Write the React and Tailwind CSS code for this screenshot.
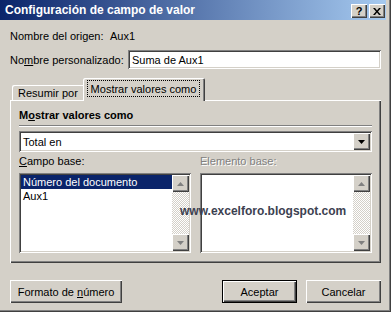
const raised = 'shadow-[inset_1px_1px_0_#ffffff,inset_-1px_-1px_0_#404040,inset_-2px_-2px_0_#808080]'
const sunken = 'shadow-[inset_1px_1px_0_#808080,inset_-1px_-1px_0_#ffffff,inset_2px_2px_0_#404040,inset_-2px_-2px_0_#d4d0c8]'

const Arrow = ({ up, color = '#000' }) => (
  <svg width="7" height="4" viewBox="0 0 7 4">
    {up ? <polygon points="3.5,0 7,4 0,4" fill={color} /> : <polygon points="0,0 7,0 3.5,4" fill={color} />}
  </svg>
)

const ScrollBar = () => (
  <div className="flex flex-col w-[17px] h-full">
    <div className={`h-[17px] bg-[#d4d0c8] flex items-center justify-center ${raised}`}>
      <Arrow up color="#808080" />
    </div>
    <div className="flex-1 bg-[repeating-conic-gradient(#d4d0c8_0_25%,#ffffff_0_50%)] bg-[length:2px_2px]" />
    <div className={`h-[17px] bg-[#d4d0c8] flex items-center justify-center ${raised}`}>
      <Arrow color="#808080" />
    </div>
  </div>
)

const Button = ({ children, className = '', isDefault }) => (
  <div className={`h-[23px] flex items-center justify-center bg-[#d4d0c8] ${isDefault ? 'border border-black' : ''} ${className}`}>
    <div className={`w-full h-full flex items-center justify-center ${raised}`}>
      <span>{children}</span>
    </div>
  </div>
)

export default function App() {
  return (
    <div className="relative w-[391px] h-[312px] overflow-hidden bg-[#d4d0c8] text-[11px] leading-[14px] text-black font-['Liberation_Sans',Arial,sans-serif] shadow-[inset_-1px_-1px_0_#404040,inset_-2px_-2px_0_#808080]">
      {/* title bar */}
      <div className="h-[20px] mr-[5px] flex items-start justify-between bg-[linear-gradient(to_right,#0a246a,#a6caf0)]">
        <div className="pl-[5px] pt-[3px] text-white font-bold text-[12px] leading-[15px]">Configuración de campo de valor</div>
        <div className="flex gap-[2px] pt-[4px] pr-[1px]">
          <div className={`w-[16px] h-[14px] bg-[#d4d0c8] flex items-center justify-center font-bold text-[11px] ${raised}`}>?</div>
          <div className={`w-[16px] h-[14px] bg-[#d4d0c8] flex items-center justify-center ${raised}`}>
            <svg width="8" height="7" viewBox="0 0 8 7">
              <path d="M0 0h2l2 2.5L6 0h2L5 3.5 8 7H6L4 4.5 2 7H0l3-3.5z" fill="#000" />
            </svg>
          </div>
        </div>
      </div>

      <div className="px-[10px]">
        <div className="mt-[9px] h-[14px] flex">
          <span className="w-[100px]">Nombre del origen:</span>
          <span>Aux1</span>
        </div>

        <div className="mt-[7px] flex items-center h-[19px]">
          <span className="w-[118px]">No<u>m</u>bre personalizado:</span>
          <div className={`flex-1 h-[19px] bg-white flex items-center pl-[4px] ${sunken}`}>Suma de Aux1</div>
        </div>

        {/* tabs */}
        <div className="mt-[9px] h-[22px] flex items-end pl-[2px]">
          <div className="w-[72px] h-[15px] pl-[6px] pt-[1px] rounded-tl-[2px] shadow-[inset_1px_1px_0_#ffffff]">Resumir por</div>
          <div className="relative z-10 w-[122px] h-[23px] -mb-[1px] -ml-[1px] bg-[#d4d0c8] rounded-t-[2px] shadow-[inset_1px_1px_0_#ffffff,inset_-1px_0_0_#404040,inset_-2px_0_0_#808080] pt-[2px] pl-[4px]">
            <div className="w-[113px] h-[17px] border border-dotted border-black flex items-center justify-center">Mostrar valores como</div>
          </div>
        </div>

        {/* tab page */}
        <div className="relative h-[163px] px-[9px] shadow-[inset_1px_1px_0_#ffffff,inset_-1px_-1px_0_#404040,inset_-2px_-2px_0_#808080]">
          <div className="pt-[8px] h-[22px] font-bold">M<u>o</u>strar valores como</div>
          <div className="mt-[3px] h-[2px] border-t border-[#808080] border-b border-b-white" />
          <div className={`mt-[4px] h-[21px] bg-white flex items-center justify-between pl-[4px] pr-[2px] ${sunken}`}>
            <span>Total en</span>
            <div className={`w-[17px] h-[17px] bg-[#d4d0c8] flex items-center justify-center ${raised}`}>
              <Arrow />
            </div>
          </div>

          <div className="mt-[2px] h-[14px] flex">
            <span className="w-[181px]"><u>C</u>ampo base:</span>
            <span className="text-[#808080] [text-shadow:1px_1px_0_#ffffff]">Elemento base:</span>
          </div>

          <div className="mt-[5px] flex gap-[9px]">
            <div className={`w-[172px] h-[80px] bg-white p-[2px] flex ${sunken}`}>
              <div className="flex-1 flex flex-col">
                <div className="h-[14px] bg-[#0a246a] text-white pl-[2px]">Número del documento</div>
                <div className="h-[14px] pl-[2px]">Aux1</div>
              </div>
              <ScrollBar />
            </div>
            <div className={`w-[172px] h-[80px] bg-white p-[2px] flex ${sunken}`}>
              <div className="flex-1" />
              <ScrollBar />
            </div>
          </div>

          <div className="absolute left-[170px] top-[104px] font-bold text-[12px] text-[#3c4150]">www.excelforo.blogspot.com</div>
        </div>

        {/* buttons */}
        <div className="mt-[17px] flex">
          <Button className="w-[112px]">Formato de <u>n</u>úmero</Button>
          <div className="flex-1" />
          <Button className="w-[75px]" isDefault>Aceptar</Button>
          <Button className="w-[75px] ml-[9px]">Cancelar</Button>
        </div>
      </div>
    </div>
  )
}
